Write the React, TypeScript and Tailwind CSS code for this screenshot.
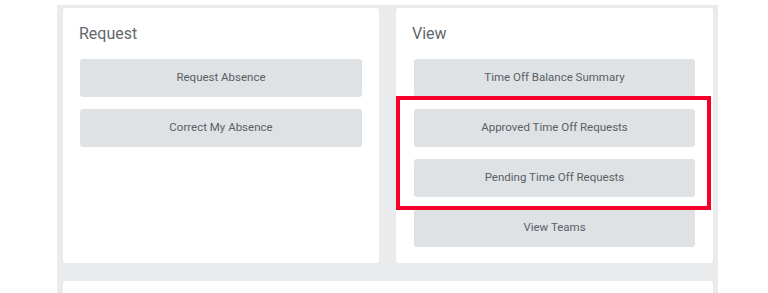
import React from 'react';

const font = { fontFamily: 'Roboto, "Liberation Sans", sans-serif' };

function ActionButton({ label }: { label: string }): JSX.Element {
  return (
    <div className="h-[38px] rounded-[3px] bg-[#dee2e5] flex items-center justify-center text-[11.5px] text-[#5a6066]">
      {label}
    </div>
  );
}

function Card({ title, items, inset }: { title: string; items: string[]; inset: string }): JSX.Element {
  return (
    <div className="bg-white rounded-[3px] h-[255px] pl-4 pt-[14px]">
      <div className="text-[16px] leading-6 text-[#62676c]">{title}</div>
      <div className={`mt-[13px] flex flex-col gap-[12px] ${inset}`}>
        {items.map((label) => (
          <ActionButton key={label} label={label} />
        ))}
      </div>
    </div>
  );
}

export default function App(): JSX.Element {
  return (
    <div className="w-[768px] h-[293px] bg-white overflow-hidden" style={font}>
      <div className="relative ml-[57px] mt-[5px] w-[661px] h-[288px] bg-[#e9ebed] pl-[6px] pr-[5px] pt-[3px]">
        <div className="grid grid-cols-[316px_317px] gap-[17px]">
          <Card title="Request" items={['Request Absence', 'Correct My Absence']} inset="pl-[1px] pr-[17px]" />
          <Card
            title="View"
            items={[
              'Time Off Balance Summary',
              'Approved Time Off Requests',
              'Pending Time Off Requests',
              'View Teams',
            ]}
            inset="pl-[2px] pr-[18px]"
          />
        </div>
        <div className="mt-[18px] h-[20px] bg-white rounded-[3px]" />
        {/* highlight annotation */}
        <div className="absolute left-[339px] top-[91px] w-[315px] h-[114px] border-4 border-[#f5002a]" />
      </div>
    </div>
  );
}
